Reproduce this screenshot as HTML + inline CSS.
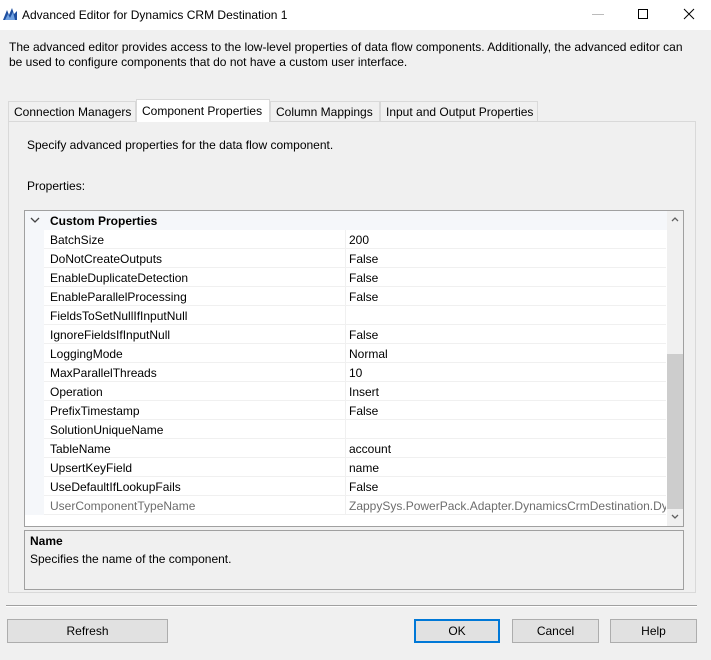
<!DOCTYPE html>
<html><head><style>
*{margin:0;padding:0;box-sizing:border-box}
body{width:711px;height:660px;background:#f0f0f0;font-family:"Liberation Sans",sans-serif;font-size:12px;color:#000;position:relative;overflow:hidden}
.a{position:absolute}
.title{left:0;top:0;width:711px;height:30px;background:#fff}
.tab{position:absolute;top:101px;height:20px;border:1px solid #d9d9d9;border-bottom:none;background:#f0f0f0;padding:3px 5px;white-space:nowrap;font-size:12px}
.row{position:absolute;left:44px;width:622px;height:19px;border-bottom:1px solid #f0f0f0;background:#fff}
.row span{position:absolute;top:3px}
.btn{position:absolute;top:619px;height:24px;background:#e1e1e1;border:1px solid #adadad;text-align:center;line-height:22px}
</style></head><body>
<div class="a title"></div>
<svg class="a" style="left:2px;top:6px" width="16" height="16" viewBox="0 0 16 16"><path d="M1 14 L5 4 L7 9 L10 2 L12 8 L15 5 L15 14 Z" fill="#1e4fa0"/><path d="M3 14 L6 8 L8 12 L11 6 L13 14Z" fill="#6fa0e0"/></svg>
<div class="a" style="left:22px;top:8px;font-size:12px">Advanced Editor for Dynamics CRM Destination 1</div>
<div class="a" style="left:592px;top:14px;width:12px;height:1px;background:#bbb"></div>
<div class="a" style="left:638px;top:9px;width:10px;height:10px;border:1px solid #000"></div>
<svg class="a" style="left:683px;top:8px" width="12" height="12"><path d="M1 1L11 11M11 1L1 11" stroke="#000" stroke-width="1"/></svg>
<div class="a" style="left:9px;top:40px;line-height:15px;width:700px">The advanced editor provides access to the low-level properties of data flow components. Additionally, the advanced editor can<br>be used to configure components that do not have a custom user interface.</div>
<div class="a" style="left:8px;top:121px;width:688px;height:472px;background:#fff;border:1px solid #d9d9d9"></div>
<div class="a" style="left:9px;top:122px;width:686px;height:470px;background:#f0f0f0"></div>
<div class="tab" style="left:8px;width:128px">Connection Managers</div>
<div class="tab" style="left:270px;width:110px">Column Mappings</div>
<div class="tab" style="left:380px;width:158px">Input and Output Properties</div>
<div class="tab" style="left:136px;top:99px;width:134px;height:23px;background:#fff;padding-top:4px">Component Properties</div>
<div class="a" style="left:27px;top:138px">Specify advanced properties for the data flow component.</div>
<div class="a" style="left:27px;top:179px">Properties:</div>
<div class="a" style="left:24px;top:210px;width:660px;height:317px;background:#fff;border:1px solid #a0a0a0"></div>
<div class="a" style="left:25px;top:211px;width:642px;height:19px;background:#f5f7fa"></div>
<div class="a" style="left:25px;top:230px;width:19px;height:285px;background:#f5f7fa"></div>
<svg class="a" style="left:30px;top:216px" width="10" height="8"><path d="M1 2L5 6L9 2" stroke="#444" fill="none" stroke-width="1.3"/></svg>
<div class="a" style="left:50px;top:214px;font-weight:bold">Custom Properties</div>
<div class="a" style="left:667px;top:211px;width:16px;height:315px;background:#f0f0f0"></div>
<div class="a" style="left:667px;top:354px;width:16px;height:155px;background:#cdcdcd"></div>
<svg class="a" style="left:671px;top:216px" width="8" height="6"><path d="M1 5L4 2L7 5" stroke="#606060" fill="none" stroke-width="1.3"/></svg>
<svg class="a" style="left:671px;top:514px" width="8" height="6"><path d="M1 1L4 4L7 1" stroke="#606060" fill="none" stroke-width="1.3"/></svg>
<div class="row" style="top:230px"><span style="left:6px">BatchSize</span><span style="left:305px">200</span></div>
<div class="row" style="top:249px"><span style="left:6px">DoNotCreateOutputs</span><span style="left:305px">False</span></div>
<div class="row" style="top:268px"><span style="left:6px">EnableDuplicateDetection</span><span style="left:305px">False</span></div>
<div class="row" style="top:287px"><span style="left:6px">EnableParallelProcessing</span><span style="left:305px">False</span></div>
<div class="row" style="top:306px"><span style="left:6px">FieldsToSetNullIfInputNull</span><span style="left:305px"></span></div>
<div class="row" style="top:325px"><span style="left:6px">IgnoreFieldsIfInputNull</span><span style="left:305px">False</span></div>
<div class="row" style="top:344px"><span style="left:6px">LoggingMode</span><span style="left:305px">Normal</span></div>
<div class="row" style="top:363px"><span style="left:6px">MaxParallelThreads</span><span style="left:305px">10</span></div>
<div class="row" style="top:382px"><span style="left:6px">Operation</span><span style="left:305px">Insert</span></div>
<div class="row" style="top:401px"><span style="left:6px">PrefixTimestamp</span><span style="left:305px">False</span></div>
<div class="row" style="top:420px"><span style="left:6px">SolutionUniqueName</span><span style="left:305px"></span></div>
<div class="row" style="top:439px"><span style="left:6px">TableName</span><span style="left:305px">account</span></div>
<div class="row" style="top:458px"><span style="left:6px">UpsertKeyField</span><span style="left:305px">name</span></div>
<div class="row" style="top:477px"><span style="left:6px">UseDefaultIfLookupFails</span><span style="left:305px">False</span></div>
<div class="row" style="top:496px;color:#6d6d6d;overflow:hidden"><span style="left:6px">UserComponentTypeName</span><span style="left:305px;white-space:nowrap">ZappySys.PowerPack.Adapter.DynamicsCrmDestination.Dyn</span></div>
<div class="a" style="left:345px;top:230px;width:1px;height:285px;background:#f0f0f0"></div>
<div class="a" style="left:24px;top:530px;width:660px;height:60px;border:1px solid #a0a0a0"></div>
<div class="a" style="left:30px;top:534px;font-weight:bold">Name</div>
<div class="a" style="left:30px;top:552px">Specifies the name of the component.</div>
<div class="a" style="left:6px;top:605px;width:691px;height:1px;background:#a0a0a0"></div>
<div class="a" style="left:6px;top:606px;width:691px;height:1px;background:#fff"></div>
<div class="btn" style="left:7px;width:161px">Refresh</div>
<div class="btn" style="left:414px;width:86px;border:2px solid #0078d7;line-height:20px">OK</div>
<div class="btn" style="left:512px;width:87px">Cancel</div>
<div class="btn" style="left:610px;width:87px">Help</div>
</body></html>
